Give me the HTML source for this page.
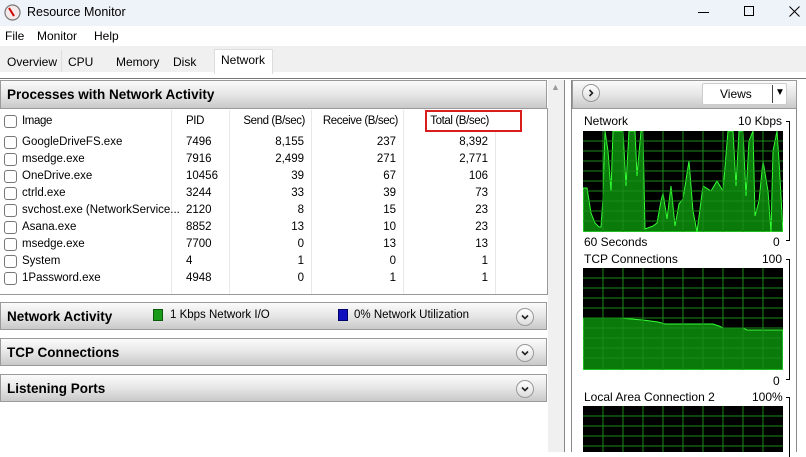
<!DOCTYPE html>
<html><head><meta charset="utf-8"><style>
*{margin:0;padding:0;box-sizing:border-box}
body{width:806px;height:452px;overflow:hidden;background:#fff;font-family:"Liberation Sans",sans-serif;font-size:12px;color:#000;position:relative}
.a{position:absolute}
.bar{position:absolute;left:0;width:547px;height:28px;background:linear-gradient(#fbfbfb,#e6e6e6 50%,#c9c9c9);border:1px solid #9a9a9a;font-weight:bold;font-size:13.5px;padding:6px 0 0 6px}
.chev{position:absolute;right:12px;top:5px;width:18px;height:18px;border-radius:50%;border:1px solid #999;background:linear-gradient(#fff,#ddd)}
.cb{position:absolute;left:4px;width:13px;height:13px;border:1px solid #777;border-radius:3px;background:#fff}
.row{position:absolute;left:0;width:547px;height:17px;font-size:11.5px}
.row span{position:absolute;top:1px}
.hd span{font-size:11.5px;letter-spacing:-0.4px}
.r{text-align:right}
.vl{position:absolute;top:110px;height:184px;width:1px;background:#e8e8e8}
.lbl{position:absolute;font-size:12px}
</style></head><body>
<div class="a" style="left:0;top:0;width:806px;height:26px;background:#eef2f9"></div>
<svg class="a" style="left:4px;top:4px" width="17" height="17"><circle cx="8.5" cy="8.5" r="7.5" fill="#f5e8e8" stroke="#777" stroke-width="1.2"/><path d="M5 4 L10 12" stroke="#c00" stroke-width="2"/></svg>
<div class="a" style="left:27px;top:5px;font-size:12.5px">Resource Monitor</div>
<div class="a" style="left:698px;top:12px;width:11px;height:1px;background:#000"></div>
<div class="a" style="left:744px;top:6px;width:10px;height:10px;border:1px solid #000"></div>
<svg class="a" style="left:789px;top:6px" width="11" height="11"><path d="M0.5 0.5L10.5 10.5M10.5 0.5L0.5 10.5" stroke="#000" stroke-width="1"/></svg>
<div class="a" style="left:0;top:26px;width:806px;height:20px;background:#fff"></div>
<div class="a" style="left:5px;top:29px">File</div>
<div class="a" style="left:37px;top:29px">Monitor</div>
<div class="a" style="left:94px;top:29px">Help</div>
<div class="a" style="left:0;top:46px;width:806px;height:26px;background:#f0f0f0"></div>
<div class="a" style="left:0;top:72px;width:806px;height:6px;background:#fff"></div>
<div class="a" style="left:61px;top:50px;width:1px;height:22px;background:#ddd"></div>
<div class="a" style="left:7px;top:55px">Overview</div>
<div class="a" style="left:68px;top:55px">CPU</div>
<div class="a" style="left:116px;top:55px">Memory</div>
<div class="a" style="left:173px;top:55px">Disk</div>
<div class="a" style="left:214px;top:49px;width:59px;height:25px;background:#fff;border:1px solid #ddd;border-bottom:none"></div>
<div class="a" style="left:221px;top:53px">Network</div>
<div class="a" style="left:0;top:78px;width:806px;height:1px;background:#777"></div>

<div class="bar" style="top:80px;height:29px">Processes with Network Activity</div>
<div class="a" style="left:547px;top:108px;width:1px;height:186px;background:#999"></div>
<div class="a" style="left:0;top:294px;width:548px;height:1px;background:#999"></div>
<div class="vl" style="left:171px"></div><div class="vl" style="left:229px"></div><div class="vl" style="left:311px"></div><div class="vl" style="left:403px"></div><div class="vl" style="left:495px"></div>
<div class="a" style="left:404px;top:110px;width:92px;height:22px;background:#fff"></div>
<div class="a" style="left:425px;top:110px;width:97px;height:22px;border:2px solid #d91c1c"></div>
<div class="row hd" style="top:114px"><div class="cb" style="top:1px"></div><span style="left:22px">Image</span><span style="left:186px">PID</span><span class="r" style="left:230px;width:75px">Send (B/sec)</span><span class="r" style="left:312px;width:86px">Receive (B/sec)</span><span class="r" style="left:404px;width:85px">Total (B/sec)</span></div>
<div class="row" style="top:135px"><div class="cb" style="top:1px"></div><span style="left:22px">GoogleDriveFS.exe</span><span style="left:186px">7496</span><span class="r" style="left:230px;width:74px">8,155</span><span class="r" style="left:312px;width:84px">237</span><span class="r" style="left:404px;width:84px">8,392</span></div>
<div class="row" style="top:152px"><div class="cb" style="top:1px"></div><span style="left:22px">msedge.exe</span><span style="left:186px">7916</span><span class="r" style="left:230px;width:74px">2,499</span><span class="r" style="left:312px;width:84px">271</span><span class="r" style="left:404px;width:84px">2,771</span></div>
<div class="row" style="top:169px"><div class="cb" style="top:1px"></div><span style="left:22px">OneDrive.exe</span><span style="left:186px">10456</span><span class="r" style="left:230px;width:74px">39</span><span class="r" style="left:312px;width:84px">67</span><span class="r" style="left:404px;width:84px">106</span></div>
<div class="row" style="top:186px"><div class="cb" style="top:1px"></div><span style="left:22px">ctrld.exe</span><span style="left:186px">3244</span><span class="r" style="left:230px;width:74px">33</span><span class="r" style="left:312px;width:84px">39</span><span class="r" style="left:404px;width:84px">73</span></div>
<div class="row" style="top:203px"><div class="cb" style="top:1px"></div><span style="left:22px">svchost.exe (NetworkService...</span><span style="left:186px">2120</span><span class="r" style="left:230px;width:74px">8</span><span class="r" style="left:312px;width:84px">15</span><span class="r" style="left:404px;width:84px">23</span></div>
<div class="row" style="top:220px"><div class="cb" style="top:1px"></div><span style="left:22px">Asana.exe</span><span style="left:186px">8852</span><span class="r" style="left:230px;width:74px">13</span><span class="r" style="left:312px;width:84px">10</span><span class="r" style="left:404px;width:84px">23</span></div>
<div class="row" style="top:237px"><div class="cb" style="top:1px"></div><span style="left:22px">msedge.exe</span><span style="left:186px">7700</span><span class="r" style="left:230px;width:74px">0</span><span class="r" style="left:312px;width:84px">13</span><span class="r" style="left:404px;width:84px">13</span></div>
<div class="row" style="top:254px"><div class="cb" style="top:1px"></div><span style="left:22px">System</span><span style="left:186px">4</span><span class="r" style="left:230px;width:74px">1</span><span class="r" style="left:312px;width:84px">0</span><span class="r" style="left:404px;width:84px">1</span></div>
<div class="row" style="top:271px"><div class="cb" style="top:1px"></div><span style="left:22px">1Password.exe</span><span style="left:186px">4948</span><span class="r" style="left:230px;width:74px">0</span><span class="r" style="left:312px;width:84px">1</span><span class="r" style="left:404px;width:84px">1</span></div>

<div class="bar" style="top:302px">Network Activity<div class="chev"><svg width="16" height="16"><path d="M5 6.5L8 9.5L11 6.5" fill="none" stroke="#222" stroke-width="1.6"/></svg></div></div>
<div class="a" style="left:153px;top:309px;width:10px;height:12px;background:#1a9a1a;border:1px solid #0a5a0a"></div>
<div class="a" style="left:170px;top:309px;font-size:11.5px">1 Kbps Network I/O</div>
<div class="a" style="left:338px;top:309px;width:10px;height:12px;background:#1010c0;border:1px solid #00006a"></div>
<div class="a" style="left:354px;top:309px;font-size:11.5px">0% Network Utilization</div>
<div class="bar" style="top:338px">TCP Connections<div class="chev"><svg width="16" height="16"><path d="M5 6.5L8 9.5L11 6.5" fill="none" stroke="#222" stroke-width="1.6"/></svg></div></div>
<div class="bar" style="top:374px">Listening Ports<div class="chev"><svg width="16" height="16"><path d="M5 6.5L8 9.5L11 6.5" fill="none" stroke="#222" stroke-width="1.6"/></svg></div></div>

<div class="a" style="left:548px;top:80px;width:17px;height:372px;background:#f0f0f0;border-right:1px solid #888"></div>
<div class="a" style="left:551px;top:82px;font-size:9px;color:#999">▲</div>
<div class="a" style="left:571px;top:80px;width:1px;height:372px;background:#888"></div>
<div class="a" style="left:572px;top:80px;width:225px;height:29px;background:linear-gradient(#fbfbfb,#e6e6e6 50%,#c9c9c9);border:1px solid #9a9a9a"></div>
<div class="a" style="left:582px;top:84px;width:18px;height:18px;border-radius:50%;border:1px solid #999;background:linear-gradient(#fff,#ddd)"><svg width="16" height="16"><path d="M6.5 5L9.5 8L6.5 11" fill="none" stroke="#222" stroke-width="1.6"/></svg></div>
<div class="a" style="left:702px;top:83px;width:85px;height:22px;background:#fff;border:1px solid #ccc;border-radius:2px"></div>
<div class="a" style="left:720px;top:87px;font-size:12px">Views</div>
<div class="a" style="left:772px;top:85px;width:1px;height:18px;background:#444"></div>
<div class="a" style="left:775px;top:87px;font-size:10px">▼</div>
<div class="a" style="left:796px;top:108px;width:1px;height:344px;background:#888"></div>

<div class="lbl" style="left:584px;top:114px">Network</div>
<div class="lbl" style="left:738px;top:114px">10 Kbps</div>
<div class="a" style="left:786px;top:121px;width:4px;height:120px;border:1px solid #000;border-left:none"></div>
<svg class="a" style="left:583px;top:131px" width="200" height="101">
<rect width="200" height="101" fill="#000"/>
<polygon fill="#0a7a0a" stroke="#3f3" stroke-width="1" points="0,101 0,57 4,57 8,82 12,92 16,96 18,96 20,67 22,0 25,20 28,60 30,0 40,0 43,55 46,0 52,0 54,45 58,0 60,0 62,98 70,95 74,92 78,70 80,62 84,88 88,55 92,95 96,73 100,68 106,30 110,80 114,101 120,55 128,60 134,50 140,60 145,0 150,0 153,55 156,0 160,0 163,65 166,10 170,0 172,85 176,70 180,30 185,60 188,101 190,20 194,0 196,30 200,101"/>
<g stroke="#1a8a1a" stroke-width="1">
<path d="M20 0V101M40 0V101M60 0V101M80 0V101M100 0V101M120 0V101M140 0V101M160 0V101M180 0V101M0 10H200M0 20H200M0 30H200M0 40H200M0 50H200M0 60H200M0 70H200M0 80H200M0 90H200"/></g>
</svg>
<div class="lbl" style="left:584px;top:235px">60 Seconds</div>
<div class="lbl" style="left:773px;top:235px">0</div>
<div class="lbl" style="left:584px;top:252px">TCP Connections</div>
<div class="lbl" style="left:762px;top:252px">100</div>
<div class="a" style="left:786px;top:259px;width:4px;height:121px;border:1px solid #000;border-left:none"></div>
<svg class="a" style="left:583px;top:268px" width="200" height="102">
<rect width="200" height="102" fill="#000"/>
<polygon fill="#0a7a0a" stroke="#3f3" stroke-width="1" points="0,102 0,50 36,50 60,52 75,54 82,56 130,56 136,58 140,60 160,60 164,62 200,62 200,102"/>
<g stroke="#1a8a1a" stroke-width="1"><path d="M20 0V102M40 0V102M60 0V102M80 0V102M100 0V102M120 0V102M140 0V102M160 0V102M180 0V102M0 10H200M0 20H200M0 30H200M0 40H200M0 50H200M0 60H200M0 70H200M0 80H200M0 90H200"/></g>
</svg>
<div class="lbl" style="left:773px;top:374px">0</div>
<div class="lbl" style="left:584px;top:390px">Local Area Connection 2</div>
<div class="lbl" style="left:752px;top:390px">100%</div>
<div class="a" style="left:786px;top:397px;width:4px;height:60px;border-top:1px solid #000;border-right:1px solid #000"></div>
<svg class="a" style="left:583px;top:406px" width="200" height="46">
<rect width="200" height="46" fill="#000"/>
<g stroke="#1a8a1a" stroke-width="1"><path d="M20 0V46M40 0V46M60 0V46M80 0V46M100 0V46M120 0V46M140 0V46M160 0V46M180 0V46M0 10H200M0 20H200M0 30H200M0 40H200"/></g>
</svg>
</body></html>
